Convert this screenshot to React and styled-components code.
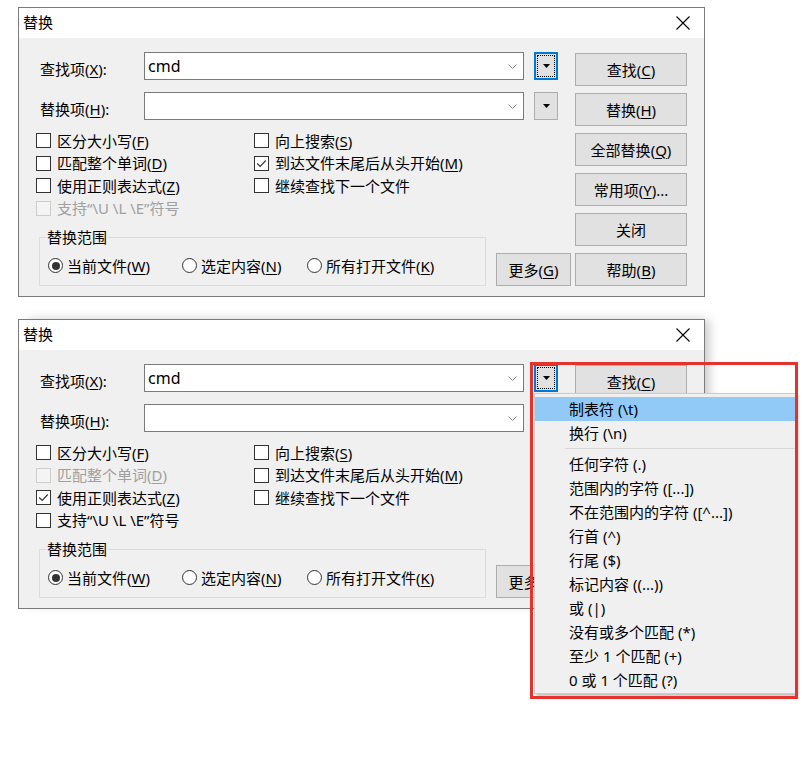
import React from 'react';
import styled, { createGlobalStyle } from 'styled-components';

const GlobalStyle = createGlobalStyle`
  body {
    margin: 0;
    background: #ffffff;
    font-family: "Noto Sans", "Noto Sans CJK SC", sans-serif;
    color: #000;
  }
`;

const Page = styled.div`
  position: relative;
  width: 805px;
  height: 774px;
  box-sizing: border-box;
  padding: 7px 0 0 18px;
  display: flex;
  flex-direction: column;
  gap: 22px;
  overflow: hidden;
`;

const Window = styled.section`
  width: 687px;
  box-sizing: border-box;
  border: 1px solid #7a7a7a;
  background: #f0f0f0;
  box-shadow: ${props => props.$raised ? '7px -2px 10px -3px rgba(0, 0, 0, 0.22)' : 'none'};
`;

const TitleBar = styled.header`
  height: 30px;
  box-sizing: border-box;
  background: #ffffff;
  display: flex;
  align-items: center;
  justify-content: space-between;
  padding: 0 14px 3px 4px;
  font-size: 15px;

  svg {
    margin-top: 3px;
  }
`;

const Body = styled.div`
  display: flex;
  gap: 4px;
  padding: 14px 17px 10px;
`;

const LeftPane = styled.div`
  width: 535px;
  display: flex;
  flex-direction: column;
`;

const FieldRow = styled.div`
  display: flex;
  align-items: center;
  height: 28px;

  & + & {
    margin-top: 12px;
  }
`;

const FieldLabel = styled.label`
  width: 108px;
  padding: 4px 0 0 4px;
  box-sizing: border-box;
  font-size: 15px;
  white-space: nowrap;
`;

const Combo = styled.div`
  width: 380px;
  height: 28px;
  box-sizing: border-box;
  border: 1px solid #7a7a7a;
  background: #ffffff;
  display: flex;
  align-items: center;
  justify-content: space-between;
  padding: 0 6px 0 3px;
  font-size: 16px;
`;

const DropButton = styled.div`
  position: relative;
  margin-left: 10px;
  width: 24px;
  height: 28px;
  box-sizing: border-box;
  background: #e1e1e1;
  border: 1px solid ${props => props.$focused ? '#0078d7' : '#adadad'};
  box-shadow: ${props => props.$focused ? 'inset 0 0 0 1px #0078d7' : 'none'};
  display: flex;
  align-items: center;
  justify-content: center;

  &::after {
    content: '';
    display: ${props => props.$focused ? 'block' : 'none'};
    position: absolute;
    inset: 2px;
    border: 1px dotted #000;
  }
`;

const CheckGrid = styled.div`
  margin-top: 9px;
  display: grid;
  grid-template-columns: 218px 1fr;
  grid-template-rows: repeat(4, 22.5px);
  grid-auto-flow: column;
`;

const CheckItem = styled.div`
  display: flex;
  align-items: center;
  gap: 6px;
  font-size: 15px;
  white-space: nowrap;
  color: ${props => props.$disabled ? '#a0a0a0' : '#000'};
`;

const Box = styled.span`
  flex: none;
  width: 15px;
  height: 15px;
  margin-top: 1px;
  box-sizing: border-box;
  border: 1px solid ${props => props.$disabled ? '#cccccc' : '#333333'};
  background: ${props => props.$disabled ? '#f4f4f4' : '#ffffff'};
  display: flex;
  align-items: center;
  justify-content: center;
`;

const BottomRow = styled.div`
  margin-top: 10px;
  display: flex;
  align-items: flex-end;
`;

const Group = styled.fieldset`
  margin: 0 0 0 3px;
  width: 447px;
  min-width: 0;
  box-sizing: border-box;
  border: 1px solid #dcdcdc;
  padding: 9px 0 10px 8px;
`;

const GroupLegend = styled.legend`
  padding: 0 1px;
  margin-left: -2px;
  font-size: 15px;
  line-height: 17px;
`;

const RadioRow = styled.div`
  display: flex;
  align-items: center;
  height: 20px;
`;

const RadioItem = styled.div`
  display: flex;
  align-items: center;
  gap: 4px;
  width: ${props => props.$width ? `${props.$width}px` : 'auto'};
  font-size: 15px;
  white-space: nowrap;
`;

const RadioCircle = styled.span`
  flex: none;
  width: 15px;
  height: 15px;
  margin-top: 1px;
  box-sizing: border-box;
  border-radius: 50%;
  border: 1px solid #333333;
  background: #ffffff;
  display: flex;
  align-items: center;
  justify-content: center;

  &::after {
    content: '';
    display: ${props => props.$selected ? 'block' : 'none'};
    width: 8px;
    height: 8px;
    border-radius: 50%;
    background: #333333;
  }
`;

const ButtonColumn = styled.div`
  width: 112px;
  margin-top: 1px;
  display: flex;
  flex-direction: column;
  gap: 7px;
`;

const PushButton = styled.div`
  width: ${props => props.$width || 112}px;
  height: 33px;
  margin-left: ${props => props.$offset || 0}px;
  box-sizing: border-box;
  background: #e1e1e1;
  border: 1px solid #adadad;
  display: flex;
  align-items: center;
  justify-content: center;
  font-size: 15px;
  white-space: nowrap;
  flex: none;
`;

const Key = styled.u`
  text-decoration-thickness: 1px;
  text-underline-offset: 2px;
`;

const Popup = styled.ul`
  position: absolute;
  left: 534px;
  top: 393px;
  width: 262px;
  box-sizing: border-box;
  margin: 0;
  padding: 3px 0 1px;
  list-style: none;
  background: #f0f0f0;
  border: 1px solid #cccccc;
  box-shadow: 2px 2px 3px rgba(0, 0, 0, 0.28);
`;

const MenuItem = styled.li`
  height: 24px;
  line-height: 24px;
  padding-left: 34px;
  font-size: 15px;
  white-space: nowrap;
  background: ${props => props.$active ? '#91c9f7' : 'transparent'};
`;

const Separator = styled.li`
  height: 1px;
  margin: 3px 0 3px 30px;
  background: #d7d7d7;
`;

const Annotation = styled.div`
  position: absolute;
  left: 530px;
  top: 362px;
  width: 268px;
  height: 337px;
  box-sizing: border-box;
  border: 3px solid #e5322d;
  pointer-events: none;
`;

const Mnemonic = ({ text, k, tail = '' }) => (
  <>
    {text}
    {k && <>(<Key>{k}</Key>)</>}
    {tail}
  </>
);

const CloseIcon = () => (
  <svg width="14" height="14" viewBox="0 0 14 14">
    <path d="M0.5 0.5 L13.5 13.5 M13.5 0.5 L0.5 13.5" stroke="#000" strokeWidth="1.1" fill="none" />
  </svg>
);

const Chevron = () => (
  <svg width="9" height="5" viewBox="0 0 9 5">
    <polyline points="0.5,0.5 4.5,4.5 8.5,0.5" stroke="#808080" strokeWidth="1" fill="none" />
  </svg>
);

const Arrow = () => (
  <svg width="7" height="4" viewBox="0 0 7 4">
    <polygon points="0,0 7,0 3.5,4" fill="#000" />
  </svg>
);

const Tick = () => (
  <svg width="13" height="13" viewBox="0 0 13 13">
    <polyline points="2.2,6.5 5.2,9.5 10.8,3.5" stroke="#333" strokeWidth="1.1" fill="none" />
  </svg>
);

const checkLabels = [
  { text: '区分大小写', k: 'F' },
  { text: '匹配整个单词', k: 'D' },
  { text: '使用正则表达式', k: 'Z' },
  { text: '支持“\\U \\L \\E”符号' },
  { text: '向上搜索', k: 'S' },
  { text: '到达文件末尾后从头开始', k: 'M' },
  { text: '继续查找下一个文件' },
];

const scopes = [
  { text: '当前文件', k: 'W', width: 134 },
  { text: '选定内容', k: 'N', width: 125 },
  { text: '所有打开文件', k: 'K' },
];

const actions = [
  { text: '查找', k: 'C' },
  { text: '替换', k: 'H' },
  { text: '全部替换', k: 'Q' },
  { text: '常用项', k: 'Y', tail: '...' },
  { text: '关闭' },
  { text: '帮助', k: 'B' },
];

const menuEntries = [
  { label: '制表符 (\\t)', active: true },
  { label: '换行 (\\n)' },
  { separator: true },
  { label: '任何字符 (.)' },
  { label: '范围内的字符 ([...])' },
  { label: '不在范围内的字符 ([^...])' },
  { label: '行首 (^)' },
  { label: '行尾 ($)' },
  { label: '标记内容 ((...))' },
  { label: '或 (|)' },
  { label: '没有或多个匹配 (*)' },
  { label: '至少 1 个匹配 (+)' },
  { label: '0 或 1 个匹配 (?)' },
];

function ReplaceDialog({ checked, disabled, raised }) {
  return (
    <Window $raised={raised}>
      <TitleBar>
        <span>替换</span>
        <CloseIcon />
      </TitleBar>
      <Body>
        <LeftPane>
          <FieldRow>
            <FieldLabel>查找项(<Key>X</Key>):</FieldLabel>
            <Combo>
              <span>cmd</span>
              <Chevron />
            </Combo>
            <DropButton $focused><Arrow /></DropButton>
          </FieldRow>
          <FieldRow>
            <FieldLabel>替换项(<Key>H</Key>):</FieldLabel>
            <Combo>
              <span />
              <Chevron />
            </Combo>
            <DropButton><Arrow /></DropButton>
          </FieldRow>

          <CheckGrid>
            {checkLabels.map((item, i) => (
              <CheckItem key={item.text} $disabled={disabled[i]}>
                <Box $disabled={disabled[i]}>{checked[i] && <Tick />}</Box>
                <span><Mnemonic text={item.text} k={item.k} /></span>
              </CheckItem>
            ))}
          </CheckGrid>

          <BottomRow>
            <Group>
              <GroupLegend>替换范围</GroupLegend>
              <RadioRow>
                {scopes.map((s, i) => (
                  <RadioItem key={s.text} $width={s.width}>
                    <RadioCircle $selected={i === 0} />
                    <span><Mnemonic text={s.text} k={s.k} /></span>
                  </RadioItem>
                ))}
              </RadioRow>
            </Group>
            <PushButton $width={75} $offset={10}>更多(<Key>G</Key>)</PushButton>
          </BottomRow>
        </LeftPane>

        <ButtonColumn>
          {actions.map(a => (
            <PushButton key={a.text}>
              <Mnemonic text={a.text} k={a.k} tail={a.tail} />
            </PushButton>
          ))}
        </ButtonColumn>
      </Body>
    </Window>
  );
}

export default function App() {
  return (
    <Page>
      <GlobalStyle />
      <ReplaceDialog
        checked={[false, false, false, false, false, true, false]}
        disabled={[false, false, false, true, false, false, false]}
      />
      <ReplaceDialog
        raised
        checked={[false, false, true, false, false, false, false]}
        disabled={[false, true, false, false, false, false, false]}
      />

      <Popup>
        {menuEntries.map((entry, i) =>
          entry.separator
            ? <Separator key={`sep-${i}`} />
            : <MenuItem key={entry.label} $active={entry.active}>{entry.label}</MenuItem>
        )}
      </Popup>
      <Annotation />
    </Page>
  );
}
